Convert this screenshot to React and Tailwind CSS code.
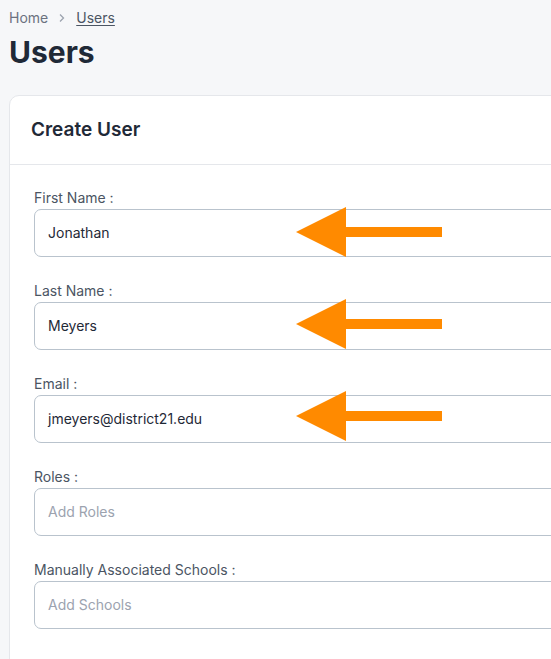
import React from "react";

function Arrow({ top }) {
  return (
    <svg
      className="absolute"
      style={{ left: 296, top }}
      width="148"
      height="50"
      viewBox="0 0 148 50"
    >
      <polygon points="0,25 50,0 50,50" fill="#ff8a00" />
      <rect x="49" y="20" width="97" height="10" fill="#ff8a00" />
    </svg>
  );
}

function Field({ label, value, placeholder }) {
  return (
    <div className="flex flex-col">
      <label className="text-sm text-[#4b5563] leading-5 mb-[1px]">{label}</label>
      <div className="h-[48px] w-[560px] rounded-[7px] border border-[#b9c3cd] bg-white flex items-center px-[13px] text-sm">
        {value ? (
          <span className="text-[#1f2937]">{value}</span>
        ) : (
          <span className="text-[#9ca3af]">{placeholder}</span>
        )}
      </div>
    </div>
  );
}

export default function App() {
  return (
    <div
      className="relative min-h-[659px] w-[551px] overflow-hidden bg-[#f6f7f9] pl-[9px] pt-[8px]"
      style={{ fontFamily: "Inter, 'Noto Sans', sans-serif" }}
    >
      <div className="flex items-center text-sm text-[#6b7280] leading-5">
        <span>Home</span>
        <svg className="mx-[9px]" width="10" height="10" viewBox="0 0 10 10">
          <path d="M3 1.5 L6.5 5 L3 8.5" fill="none" stroke="#9ca3af" strokeWidth="1.3" />
        </svg>
        <span className="underline underline-offset-2 text-[#4b5563]">Users</span>
      </div>
      <h1 className="mt-[4px] text-[30px] font-bold text-[#1f2937] leading-[40px]">Users</h1>

      <div className="mt-[23px] w-[600px] rounded-tl-[10px] border border-[#e5e7eb] bg-white">
        <div className="h-[69px] flex items-center px-[21px] border-b border-[#e5e7eb]">
          <h2 className="text-[19px] font-semibold text-[#1f2937]">Create User</h2>
        </div>
        <div className="flex flex-col gap-[24px] px-[24px] pt-[23px] pb-[40px]">
          <Field label="First Name :" value="Jonathan" />
          <Field label="Last Name :" value="Meyers" />
          <Field label="Email :" value="jmeyers@district21.edu" />
          <Field label="Roles :" placeholder="Add Roles" />
          <Field label="Manually Associated Schools :" placeholder="Add Schools" />
        </div>
      </div>

      <Arrow top={207} />
      <Arrow top={299} />
      <Arrow top={391} />
    </div>
  );
}
